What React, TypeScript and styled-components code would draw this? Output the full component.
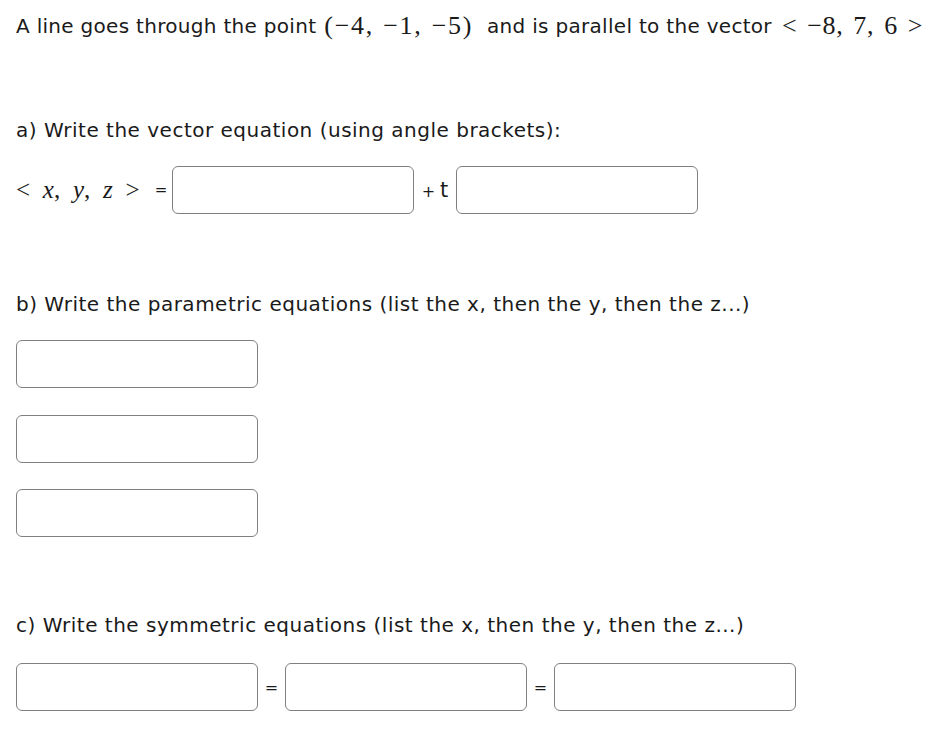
import React from "react";
import styled, { createGlobalStyle } from "styled-components";

const Global = createGlobalStyle`
  html, body { margin: 0; padding: 0; background: #fff; }
  body { font-family: "DejaVu Sans", Tahoma, sans-serif; color: #1a1a1a; }
`;

const Page = styled.div`
  padding: 14px 16px 0 16px;
`;

const Line = styled.div<{ $top?: number }>`
  font-size: 20px;
  line-height: 24px;
  letter-spacing: 0.5px;
  margin-top: ${(p) => p.$top ?? 0}px;
  display: flex;
  align-items: center;
  white-space: nowrap;
`;

const Intro = styled(Line)`
  letter-spacing: 0.3px;
`;

const MathSpan = styled.span<{ $l?: number; $r?: number; $ls?: number; $ws?: number }>`
  font-family: "Liberation Serif", "DejaVu Serif", serif;
  font-size: 26px;
  letter-spacing: ${(p) => p.$ls ?? 0.6}px;
  word-spacing: ${(p) => p.$ws ?? 1}px;
  margin: 0 ${(p) => p.$r ?? 8}px 0 ${(p) => p.$l ?? 8}px;
  white-space: pre;
`;

const I = styled.i`
  font-style: italic;
`;

const Row = styled.div<{ $top: number }>`
  display: flex;
  align-items: center;
  margin-top: ${(p) => p.$top}px;
`;

const Column = styled.div<{ $top: number }>`
  display: flex;
  flex-direction: column;
  gap: 26.5px;
  margin-top: ${(p) => p.$top}px;
`;

const Box = styled.input`
  box-sizing: border-box;
  width: 242px;
  height: 48px;
  border: 1px solid #808080;
  border-radius: 6px;
  background: #fff;
  margin: 0;
  padding: 0 8px;
  font-size: 16px;
  outline: none;
  flex-shrink: 0;
`;

const Sep = styled.span<{ $w: number }>`
  width: ${(p) => p.$w}px;
  flex-shrink: 0;
  text-align: center;
  font-size: 16px;
`;

const T = styled.span`
  font-size: 21px;
  margin-left: 5px;
`;

const Label = styled.span`
  display: flex;
  align-items: center;
  width: 156px;
  flex-shrink: 0;
  white-space: nowrap;
`;

const LabelMath = styled.span`
  font-family: "Liberation Serif", "DejaVu Serif", serif;
  font-size: 25px;
  word-spacing: 6.5px;
  white-space: pre;
`;

const Eq = styled.span`
  font-size: 15px;
  margin-left: 15px;
`;

export default function App() {
  return (
    <>
      <Global />
      <Page>
        <Intro>
          A line goes through the point
          <MathSpan $l={8} $r={14} $ls={1.7}>(−4, −1, −5)</MathSpan>
          and is parallel to the vector
          <MathSpan $l={10} $r={0} $ls={0.6} $ws={3}>{"< −8, 7, 6 >"}</MathSpan>
        </Intro>
        <Line $top={80}>a) Write the vector equation (using angle brackets):</Line>
        <Row $top={24}>
          <Label>
            <LabelMath>
              {"< "}
              <I>x</I>
              {", "}
              <I>y</I>
              {", "}
              <I>z</I>
              {" >"}
            </LabelMath>
            <Eq>=</Eq>
          </Label>
          <Box />
          <Sep $w={42}>
            +<T>t</T>
          </Sep>
          <Box />
        </Row>
        <Line $top={78}>b) Write the parametric equations (list the x, then the y, then the z...)</Line>
        <Column $top={24}>
          <Box />
          <Box />
          <Box />
        </Column>
        <Line $top={76}>c) Write the symmetric equations (list the x, then the y, then the z...)</Line>
        <Row $top={26}>
          <Box />
          <Sep $w={27}>=</Sep>
          <Box />
          <Sep $w={27}>=</Sep>
          <Box />
        </Row>
      </Page>
    </>
  );
}
